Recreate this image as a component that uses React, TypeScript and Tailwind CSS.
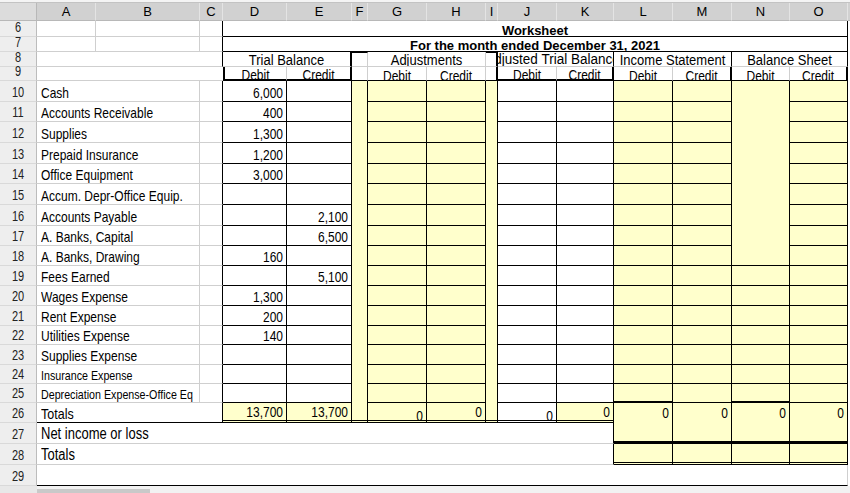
import React from 'react';

const base = 'flex min-w-0 overflow-hidden whitespace-nowrap leading-none text-black';

// border shorthands
const rG = 'border-r border-r-[#cfcfcf]';
const rB = 'border-r border-r-black';
const rB2 = 'border-r-2 border-r-black';
const bG = 'border-b border-b-[#cfcfcf]';
const bB = 'border-b border-b-black';
const bB2 = 'border-b-2 border-b-black';
const bDbl = 'border-b-[3px] border-b-black border-double';
const Y = 'bg-[#ffffcc]';

const num = 'items-end justify-end pr-[3px] text-[12px]';
const mid = 'items-end justify-center text-[12px]';
const bold = 'items-end justify-center font-bold text-[13px]';
const h8 = 'items-end justify-center text-[13px]';

const T = ({ children, cls = 'scale-y-[1.2]' }: { children: React.ReactNode; cls?: string }) => (
  <span className={`inline-block leading-[1.2] origin-[50%_79%] ${cls}`}>{children}</span>
);

const letters = ['A', 'B', 'C', 'D', 'E', 'F', 'G', 'H', 'I', 'J', 'K', 'L', 'M', 'N', 'O'];

const accounts = [
  { name: 'Cash', debit: '6,000', credit: '' },
  { name: 'Accounts Receivable', debit: '400', credit: '' },
  { name: 'Supplies', debit: '1,300', credit: '' },
  { name: 'Prepaid Insurance', debit: '1,200', credit: '' },
  { name: 'Office Equipment', debit: '3,000', credit: '' },
  { name: 'Accum. Depr-Office Equip.', debit: '', credit: '' },
  { name: 'Accounts Payable', debit: '', credit: '2,100' },
  { name: 'A. Banks, Capital', debit: '', credit: '6,500' },
  { name: 'A. Banks, Drawing', debit: '160', credit: '' },
  { name: 'Fees Earned', debit: '', credit: '5,100' },
  { name: 'Wages Expense', debit: '1,300', credit: '' },
  { name: 'Rent Expense', debit: '200', credit: '' },
  { name: 'Utilities Expense', debit: '140', credit: '' },
  { name: 'Supplies Expense', debit: '', credit: '' },
  { name: 'Insurance Expense', debit: '', credit: '' },
  { name: 'Depreciation Expense-Office Eq', debit: '', credit: '' },
];

const App = () => {
  const cells: React.ReactNode[] = [];
  let k = 0;
  const add = (cls: string, children?: React.ReactNode) => {
    cells.push(
      <div key={k++} className={`${base} ${cls}`}>
        {children}
      </div>
    );
  };
  const rowHead = (n: number) =>
    cells.push(
      <div
        key={k++}
        className="flex items-end justify-center whitespace-nowrap leading-none bg-[#eeeeee] border-r border-r-[#bcbcbc] border-b border-b-[#d9d9d9] text-[11px] text-[#222]"
      >
        <span className="inline-block origin-bottom scale-y-[1.3] mb-[1px]">{n}</span>
      </div>
    );
  const filler = () => add('');

  // column headers
  add('bg-[#dcdcdc] border-r border-r-[#b8b8b8] border-b border-b-[#b8b8b8]');
  letters.forEach((l) =>
    add('items-center justify-center bg-[#d1d1d1] border-r border-r-[#e4e4e4] border-b border-b-[#b8b8b8] text-[13px] text-[#1a1a1a]', l)
  );
  add('bg-[#d1d1d1] border-b border-b-[#b8b8b8]');

  // rows 6-7: titles
  rowHead(6);
  add(`${rG} ${bG}`);
  add(`${rG} ${bG}`);
  add(`${rB} ${bG}`);
  add(`col-span-12 ${rB} ${bB} ${bold}`, <span className="mb-[-1px]">Worksheet</span>);
  filler();

  rowHead(7);
  add(`${rG} ${bG}`);
  add(`${rG} ${bG}`);
  add(`${rB} ${bG}`);
  add(`col-span-12 ${rB} ${bB} ${bold}`, <span className="mb-[-1px]">For the month ended December 31, 2021</span>);
  filler();

  // row 8: section headings
  const head = (t: string) => <T cls="mb-[-3px] scale-y-[1.1]">{t}</T>;
  rowHead(8);
  add(`col-span-2 ${bG}`);
  add(`${rB} ${bG}`);
  add(`col-span-2 ${rB2} ${bG} ${h8}`, head('Trial Balance'));
  add(`${rG} ${bG} border-t border-t-black`);
  add(`col-span-2 ${rG} ${bG} ${h8}`, head('Adjustments'));
  add(`${rB2} ${bG} border-t border-t-black`);
  add(
    `col-span-2 ${rB} ${bG} items-end justify-center pr-[6px] text-[13.5px]`,
    <T cls="mb-[-2px] scale-y-[1.05]">Adjusted Trial Balance</T>
  );
  add(`col-span-2 ${rB} ${bG} ${h8}`, head('Income Statement'));
  add(`col-span-2 ${rB} ${bG} ${h8}`, head('Balance Sheet'));
  filler();

  // row 9: debit / credit
  const dc = (t: string) => <T cls="mb-[-4px] scale-y-[1.2]">{t}</T>;
  rowHead(9);
  add(`col-span-2 ${bG}`);
  add(`${bG}`);
  add(`border-l-2 border-l-black ${rG} ${bB2} ${mid}`, dc('Debit'));
  add(`${rB2} ${bB2} ${mid}`, dc('Credit'));
  add(`${rG} ${bB}`);
  add(`${rG} ${bB} ${mid}`, dc('Debit'));
  add(`${rG} ${bB} ${mid}`, dc('Credit'));
  add(`${rB2} ${bB}`);
  add(`${rG} ${bB2} ${mid}`, dc('Debit'));
  add(`${rB2} ${bB2} ${mid}`, dc('Credit'));
  add(`${rG} ${bB} ${mid}`, dc('Debit'));
  add(`${rB2} ${bB} ${mid}`, dc('Credit'));
  add(`${rG} ${bB} ${mid}`, dc('Debit'));
  add(`${rB2} ${bB} ${mid}`, dc('Credit'));
  filler();

  // rows 10-25: accounts
  accounts.forEach((a, i) => {
    const r = 10 + i;
    rowHead(r);
    add(
      `col-span-2 ${rG} ${bG} items-end pl-[4px] ${i >= 14 ? 'text-[10.7px]' : 'text-[12px]'}`,
      <T>{a.name}</T>
    );
    add(`${rB} ${bG}`);
    add(`${rB} ${bB} ${num}`, a.debit && <T>{a.debit}</T>);
    add(`${rB} ${bB} ${num}`, a.credit && <T>{a.credit}</T>);
    add(`${rB} ${Y}`);
    add(`${rB} ${bB} ${Y}`);
    add(`${rB} ${bB} ${Y}`);
    add(`${rB} ${Y}`);
    add(`${rB} ${bB}`);
    add(`${rB} ${bB}`);
    add(`${rB} ${r === 25 ? bB2 : bB} ${Y}`);
    add(`${rB} ${bB} ${Y}`);
    if (r === 10) add(`row-span-9 ${rB} ${bB} ${Y}`);
    else if (r >= 19) add(`${rB} ${r === 25 ? bB2 : bB} ${Y}`);
    add(`${rB} ${bB} ${Y}`);
    filler();
  });

  // row 26: totals
  const low = <T cls="relative top-[4px] scale-y-[1.2]">0</T>;
  rowHead(26);
  add(`col-span-2 ${bB} items-end pl-[4px] text-[12.5px]`, <T cls="mb-[-1px] scale-y-[1.2]">Totals</T>);
  add(`${rB} ${bB}`);
  add(`${rB} ${bDbl} ${Y} ${num}`, <T>13,700</T>);
  add(`${rB} ${bDbl} ${Y} ${num}`, <T>13,700</T>);
  add(`${rB} ${bDbl} ${Y}`);
  add(`${rB} ${bDbl} ${Y} ${num}`, low);
  add(`${rB} ${bDbl} ${Y} ${num}`, <T>0</T>);
  add(`${rB} ${bDbl} ${Y}`);
  add(`${rB} ${bDbl} ${num}`, low);
  add(`${rB} ${bDbl} ${Y} ${num}`, <T>0</T>);
  for (let c = 0; c < 4; c++) {
    add(
      `row-span-2 ${rB} border-b-[3px] border-b-black ${Y} items-start justify-end pr-[3px] pt-[4px] text-[12px]`,
      <T>0</T>
    );
  }
  filler();

  // rows 27-29
  rowHead(27);
  add(`col-span-10 ${bG} items-end pl-[4px] text-[13px]`, <T>Net income or loss</T>);
  add(`${rB} ${bG}`);
  filler();

  rowHead(28);
  add(`col-span-10 ${bG} items-end pl-[4px] text-[13px]`, <T>Totals</T>);
  add(`${rB} ${bG}`);
  for (let c = 0; c < 4; c++) add(`${rB} ${bDbl} ${Y}`);
  filler();

  rowHead(29);
  add(`col-span-15 ${bB} ${rG}`);
  filler();

  return (
    <div className="w-[850px] h-[493px] overflow-hidden bg-white font-['Liberation_Sans',Arial,sans-serif]">
      <div className="h-[3px] bg-[#f4f4f4] border-b border-b-[#c3c3c3]" />
      <div className="grid grid-cols-[37px_59px_104px_23px_64px_65px_16px_59px_59px_12px_59px_57px_59px_59px_58px_58px_1fr] grid-rows-[18px_16px_15px_15px_14px_21px_20px_21px_21px_20px_21px_21px_20px_20px_20px_20px_20px_19px_20px_19px_19px_20px_21px_21px_21px]">
        {cells}
      </div>
      <div className="flex h-[7px] bg-[#f2f2f2]">
        <div className="w-[37px] bg-[#e8e8e8]" />
        <div className="mt-[3px] w-[113px] bg-[#c9c9c9]" />
      </div>
    </div>
  );
};

export default App;
